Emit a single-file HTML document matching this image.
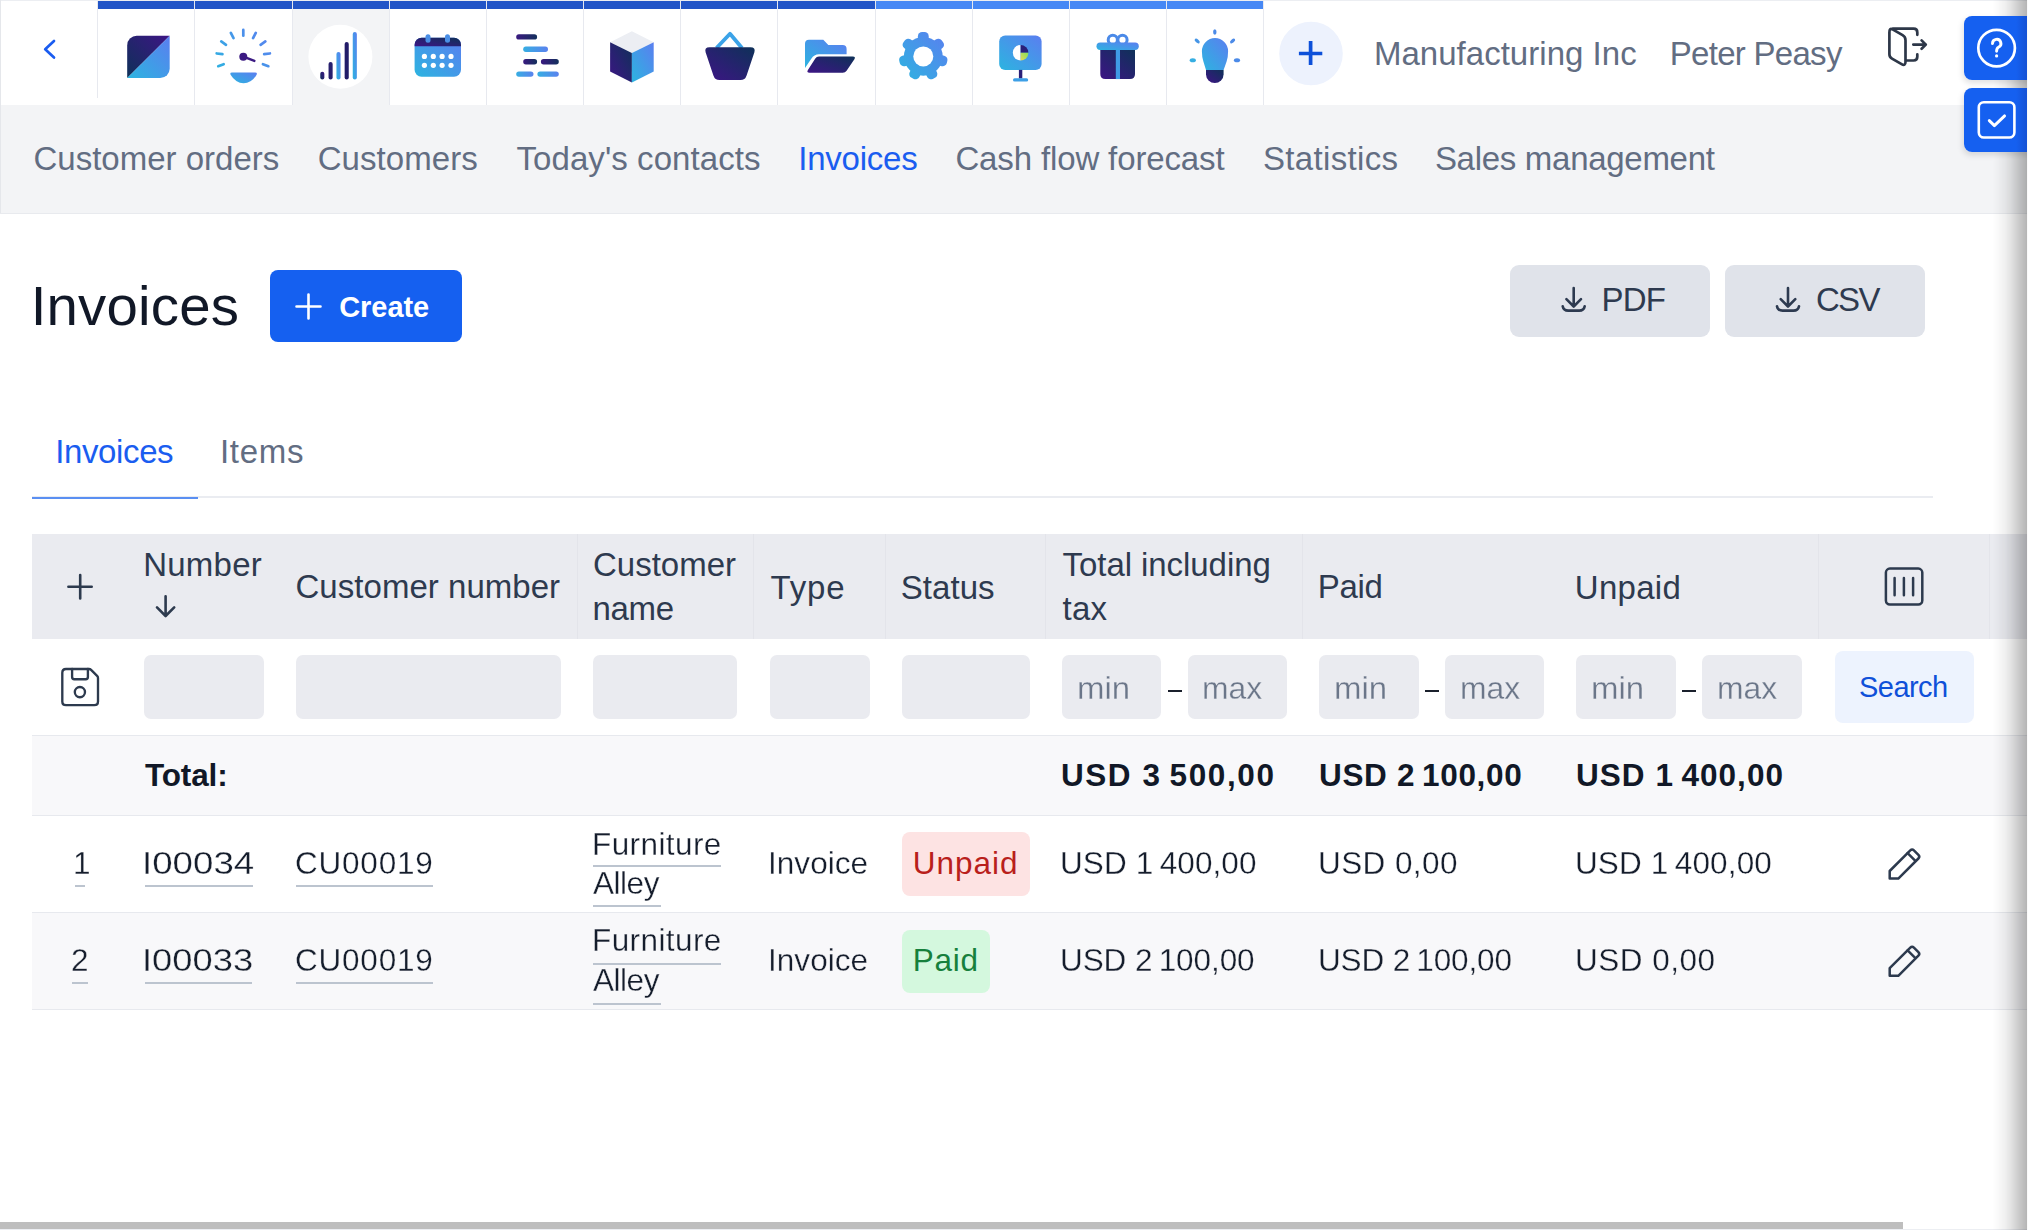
<!DOCTYPE html>
<html><head><meta charset="utf-8">
<style>
html,body{margin:0;padding:0;}
body{width:2028px;height:1230px;overflow:hidden;position:relative;background:#fff;font-family:"Liberation Sans",sans-serif;}
.a{position:absolute;}
.t{position:absolute;line-height:1;white-space:nowrap;}
.cell{position:absolute;top:0;height:105px;}
.vline{position:absolute;width:1px;background:#e6e8ee;}
.hline{position:absolute;height:1px;background:#e7e9ee;}
.inp{position:absolute;background:#eaebf0;border-radius:7px;top:655px;height:64px;}
.ul{position:absolute;height:2px;background:#bcc4cf;}
</style></head><body>
<!-- top bar -->
<div class="a" style="left:0;top:0;width:2028px;height:1px;background:#eceef2"></div>
<div class="a" style="left:0;top:0;width:1px;height:213px;background:#e5e7eb"></div>
<div class="a" style="left:292.2px;top:9px;width:97px;height:96px;background:#f3f4f6"></div>
<div class="a" style="left:98.20px;top:1px;width:96.18px;height:8px;background:#2255c7"></div>
<div class="a" style="left:195.38px;top:1px;width:96.18px;height:8px;background:#2255c7"></div>
<div class="a" style="left:292.56px;top:1px;width:96.18px;height:8px;background:#2255c7"></div>
<div class="a" style="left:389.74px;top:1px;width:96.18px;height:8px;background:#2255c7"></div>
<div class="a" style="left:486.92px;top:1px;width:96.18px;height:8px;background:#2255c7"></div>
<div class="a" style="left:584.10px;top:1px;width:96.18px;height:8px;background:#2255c7"></div>
<div class="a" style="left:681.28px;top:1px;width:96.18px;height:8px;background:#2255c7"></div>
<div class="a" style="left:778.46px;top:1px;width:96.18px;height:8px;background:#2255c7"></div>
<div class="a" style="left:875.64px;top:1px;width:96.18px;height:8px;background:#4688f5"></div>
<div class="a" style="left:972.82px;top:1px;width:96.18px;height:8px;background:#4688f5"></div>
<div class="a" style="left:1070.00px;top:1px;width:96.18px;height:8px;background:#4688f5"></div>
<div class="a" style="left:1167.18px;top:1px;width:96.18px;height:8px;background:#4688f5"></div>
<div class="a" style="left:97.20px;top:1px;width:1px;height:97px;background:#e7e9ef"></div>
<div class="a" style="left:194.38px;top:1px;width:1px;height:105px;background:#e7e9ef"></div>
<div class="a" style="left:291.56px;top:1px;width:1px;height:105px;background:#e7e9ef"></div>
<div class="a" style="left:388.74px;top:1px;width:1px;height:105px;background:#e7e9ef"></div>
<div class="a" style="left:485.92px;top:1px;width:1px;height:105px;background:#e7e9ef"></div>
<div class="a" style="left:583.10px;top:1px;width:1px;height:105px;background:#e7e9ef"></div>
<div class="a" style="left:680.28px;top:1px;width:1px;height:105px;background:#e7e9ef"></div>
<div class="a" style="left:777.46px;top:1px;width:1px;height:105px;background:#e7e9ef"></div>
<div class="a" style="left:874.64px;top:1px;width:1px;height:105px;background:#e7e9ef"></div>
<div class="a" style="left:971.82px;top:1px;width:1px;height:105px;background:#e7e9ef"></div>
<div class="a" style="left:1069.00px;top:1px;width:1px;height:105px;background:#e7e9ef"></div>
<div class="a" style="left:1166.18px;top:1px;width:1px;height:105px;background:#e7e9ef"></div>
<div class="a" style="left:1263.36px;top:1px;width:1px;height:105px;background:#e7e9ef"></div>
<!-- nav -->
<div class="a" style="left:1px;top:105px;width:2027px;height:108px;background:#f3f4f6"></div>
<div class="a" style="left:0;top:213px;width:2028px;height:1px;background:#e8eaee"></div>

<!-- buttons -->
<div class="a" style="left:270px;top:270px;width:192px;height:72px;background:#1560f0;border-radius:8px"></div>
<div class="a" style="left:1510px;top:264.5px;width:200px;height:72px;background:#e0e3ea;border-radius:9px"></div>
<div class="a" style="left:1725px;top:264.5px;width:200px;height:72px;background:#e0e3ea;border-radius:9px"></div>

<!-- tabs -->
<div class="a" style="left:32px;top:496px;width:1901px;height:2px;background:#eaecf1"></div>
<div class="a" style="left:32px;top:496.8px;width:166px;height:2.2px;background:#5a8ff2"></div>

<!-- table -->
<div class="a" style="left:32px;top:534px;width:1996px;height:105px;background:#eaebf0"></div>
<div class="vline" style="left:577px;top:534px;height:105px;background:#e3e4ea"></div>
<div class="vline" style="left:753px;top:534px;height:105px;background:#e3e4ea"></div>
<div class="vline" style="left:885px;top:534px;height:105px;background:#e3e4ea"></div>
<div class="vline" style="left:1045px;top:534px;height:105px;background:#e3e4ea"></div>
<div class="vline" style="left:1302px;top:534px;height:105px;background:#e3e4ea"></div>
<div class="vline" style="left:1818px;top:534px;height:105px;background:#e3e4ea"></div>
<div class="vline" style="left:1989px;top:534px;height:105px;background:#e3e4ea"></div>

<div class="inp" style="left:144px;width:120px"></div>
<div class="inp" style="left:296px;width:265px"></div>
<div class="inp" style="left:593px;width:144px"></div>
<div class="inp" style="left:769.5px;width:100px"></div>
<div class="inp" style="left:902px;width:128px"></div>
<div class="inp" style="left:1062px;width:99px"></div>
<div class="inp" style="left:1187.5px;width:99px"></div>
<div class="inp" style="left:1319px;width:100px"></div>
<div class="inp" style="left:1445px;width:99px"></div>
<div class="inp" style="left:1576.3px;width:100px"></div>
<div class="inp" style="left:1702px;width:100px"></div>
<div class="a" style="left:1168px;top:689.5px;width:14px;height:2px;background:#1a202c"></div>
<div class="a" style="left:1425px;top:689.5px;width:14px;height:2px;background:#1a202c"></div>
<div class="a" style="left:1682px;top:689.5px;width:14px;height:2px;background:#1a202c"></div>
<div class="a" style="left:1834.6px;top:650.5px;width:139px;height:72px;background:#edf3fe;border-radius:8px"></div>

<div class="hline" style="left:32px;top:735px;width:1996px"></div>
<div class="a" style="left:32px;top:736px;width:1996px;height:79px;background:#f8f8fa"></div>
<div class="hline" style="left:32px;top:815px;width:1996px"></div>
<div class="hline" style="left:32px;top:912px;width:1996px"></div>
<div class="a" style="left:32px;top:913px;width:1996px;height:96px;background:#f8f8fa"></div>
<div class="hline" style="left:32px;top:1009px;width:1996px"></div>

<!-- badges -->
<div class="a" style="left:902px;top:832.3px;width:127.6px;height:63.5px;background:#fde3e3;border-radius:8px"></div>
<div class="a" style="left:902px;top:929.6px;width:87.5px;height:63.5px;background:#d4f8de;border-radius:8px"></div>

<!-- underlines -->
<div class="ul" style="left:75px;top:884.6px;width:10px"></div>
<div class="ul" style="left:145px;top:884.6px;width:108px"></div>
<div class="ul" style="left:296px;top:884.6px;width:137px"></div>
<div class="ul" style="left:593px;top:865.3px;width:127.5px"></div>
<div class="ul" style="left:593px;top:905.4px;width:68px"></div>
<div class="ul" style="left:72px;top:982px;width:16px"></div>
<div class="ul" style="left:145px;top:982px;width:106.5px"></div>
<div class="ul" style="left:296px;top:982px;width:137px"></div>
<div class="ul" style="left:593px;top:962.7px;width:127.5px"></div>
<div class="ul" style="left:593px;top:1002.5px;width:68px"></div>

<div class="t" style="left:1373.90px;top:36.95px;font-size:33.00px;letter-spacing:0.030px;color:#626d82;">Manufacturing Inc</div>
<div class="t" style="left:1669.80px;top:36.95px;font-size:33.00px;letter-spacing:-0.715px;color:#626d82;">Peter Peasy</div>
<div class="t" style="left:33.50px;top:142.05px;font-size:33.00px;letter-spacing:0.003px;color:#626d82;">Customer orders</div>
<div class="t" style="left:317.70px;top:142.05px;font-size:33.00px;letter-spacing:0.081px;color:#626d82;">Customers</div>
<div class="t" style="left:516.50px;top:142.05px;font-size:33.00px;letter-spacing:0.072px;color:#626d82;">Today's contacts</div>
<div class="t" style="left:798.30px;top:142.05px;font-size:33.00px;letter-spacing:-0.235px;color:#1a5df0;">Invoices</div>
<div class="t" style="left:955.40px;top:142.05px;font-size:33.00px;letter-spacing:-0.133px;color:#626d82;">Cash flow forecast</div>
<div class="t" style="left:1262.90px;top:142.05px;font-size:33.00px;letter-spacing:0.352px;color:#626d82;">Statistics</div>
<div class="t" style="left:1434.90px;top:142.05px;font-size:33.00px;letter-spacing:-0.289px;color:#626d82;">Sales management</div>
<div class="t" style="left:30.70px;top:278.03px;font-size:56.40px;letter-spacing:0.189px;color:#111827;">Invoices</div>
<div class="t" style="left:339.20px;top:293.44px;font-size:29.00px;letter-spacing:-0.055px;color:#ffffff;font-weight:bold;">Create</div>
<div class="t" style="left:1601.40px;top:282.95px;font-size:33.00px;letter-spacing:-0.700px;color:#2e3a4f;">PDF</div>
<div class="t" style="left:1816.00px;top:282.95px;font-size:33.00px;letter-spacing:-1.724px;color:#2e3a4f;">CSV</div>
<div class="t" style="left:55.20px;top:434.95px;font-size:33.00px;letter-spacing:-0.378px;color:#1a5df0;">Invoices</div>
<div class="t" style="left:220.00px;top:434.95px;font-size:33.00px;letter-spacing:0.704px;color:#626d82;">Items</div>
<div class="t" style="left:143.20px;top:548.45px;font-size:33.00px;letter-spacing:0.244px;color:#2e3a4f;">Number</div>
<div class="t" style="left:295.50px;top:570.45px;font-size:33.00px;letter-spacing:0.036px;color:#2e3a4f;">Customer number</div>
<div class="t" style="left:593.00px;top:547.95px;font-size:33.00px;letter-spacing:-0.008px;color:#2e3a4f;">Customer</div>
<div class="t" style="left:592.60px;top:592.05px;font-size:33.00px;letter-spacing:-0.378px;color:#2e3a4f;">name</div>
<div class="t" style="left:770.50px;top:570.65px;font-size:33.00px;letter-spacing:0.852px;color:#2e3a4f;">Type</div>
<div class="t" style="left:900.70px;top:570.65px;font-size:33.00px;letter-spacing:0.069px;color:#2e3a4f;">Status</div>
<div class="t" style="left:1062.60px;top:548.25px;font-size:33.00px;letter-spacing:-0.066px;color:#2e3a4f;">Total including</div>
<div class="t" style="left:1062.60px;top:591.75px;font-size:33.00px;letter-spacing:0.139px;color:#2e3a4f;">tax</div>
<div class="t" style="left:1317.80px;top:570.35px;font-size:33.00px;letter-spacing:-0.344px;color:#2e3a4f;">Paid</div>
<div class="t" style="left:1574.80px;top:570.55px;font-size:33.00px;letter-spacing:0.285px;color:#2e3a4f;">Unpaid</div>
<div class="t" style="left:1076.71px;top:672.97px;font-size:30.50px;color:#6b7689;transform:scaleX(1.0811);transform-origin:0 0;-webkit-text-stroke:0.3px #eaebf0;will-change:transform;">min</div>
<div class="t" style="left:1333.61px;top:672.97px;font-size:30.50px;color:#6b7689;transform:scaleX(1.0811);transform-origin:0 0;-webkit-text-stroke:0.3px #eaebf0;will-change:transform;">min</div>
<div class="t" style="left:1591.31px;top:672.97px;font-size:30.50px;color:#6b7689;transform:scaleX(1.0811);transform-origin:0 0;-webkit-text-stroke:0.3px #eaebf0;will-change:transform;">min</div>
<div class="t" style="left:1202.29px;top:672.97px;font-size:30.50px;color:#6b7689;transform:scaleX(1.0440);transform-origin:0 0;-webkit-text-stroke:0.3px #eaebf0;will-change:transform;">max</div>
<div class="t" style="left:1459.79px;top:672.97px;font-size:30.50px;color:#6b7689;transform:scaleX(1.0440);transform-origin:0 0;-webkit-text-stroke:0.3px #eaebf0;will-change:transform;">max</div>
<div class="t" style="left:1716.99px;top:672.97px;font-size:30.50px;color:#6b7689;transform:scaleX(1.0440);transform-origin:0 0;-webkit-text-stroke:0.3px #eaebf0;will-change:transform;">max</div>
<div class="t" style="left:1859.00px;top:672.74px;font-size:29.00px;letter-spacing:-0.534px;color:#0f50d9;">Search</div>
<div class="t" style="left:145.00px;top:759.92px;font-size:31.50px;letter-spacing:-0.156px;color:#111827;font-weight:bold;">Total:</div>
<div class="t" style="left:1060.90px;top:759.62px;font-size:31.50px;letter-spacing:1.598px;color:#111827;font-weight:bold;">USD 3 500,00</div>
<div class="t" style="left:1319.00px;top:759.62px;font-size:31.50px;letter-spacing:0.661px;color:#111827;font-weight:bold;">USD 2 100,00</div>
<div class="t" style="left:1576.00px;top:759.62px;font-size:31.50px;letter-spacing:1.052px;color:#111827;font-weight:bold;">USD 1 400,00</div>
<div class="t" style="left:73.20px;top:847.92px;font-size:31.50px;letter-spacing:0.000px;color:#151d2c;-webkit-text-stroke:0.3px #ffffff;will-change:transform;">1</div>
<div class="t" style="left:141.61px;top:847.92px;font-size:31.50px;color:#151d2c;transform:scaleX(1.1652);transform-origin:0 0;-webkit-text-stroke:0.3px #ffffff;will-change:transform;">I00034</div>
<div class="t" style="left:1060.20px;top:847.92px;font-size:31.50px;letter-spacing:0.098px;color:#151d2c;-webkit-text-stroke:0.3px #ffffff;will-change:transform;">USD 1 400,00</div>
<div class="t" style="left:1318.00px;top:847.92px;font-size:31.50px;letter-spacing:0.407px;color:#151d2c;-webkit-text-stroke:0.3px #ffffff;will-change:transform;">USD 0,00</div>
<div class="t" style="left:1575.00px;top:847.92px;font-size:31.50px;letter-spacing:0.125px;color:#151d2c;-webkit-text-stroke:0.3px #ffffff;will-change:transform;">USD 1 400,00</div>
<div class="t" style="left:912.70px;top:847.92px;font-size:31.50px;letter-spacing:1.015px;color:#b91f1c;">Unpaid</div>
<div class="t" style="left:295.20px;top:847.92px;font-size:31.50px;letter-spacing:0.785px;color:#151d2c;-webkit-text-stroke:0.3px #ffffff;will-change:transform;">CU00019</div>
<div class="t" style="left:591.70px;top:828.52px;font-size:31.50px;letter-spacing:0.417px;color:#151d2c;-webkit-text-stroke:0.3px #ffffff;will-change:transform;">Furniture</div>
<div class="t" style="left:593.00px;top:867.92px;font-size:31.50px;letter-spacing:-0.473px;color:#151d2c;-webkit-text-stroke:0.3px #ffffff;will-change:transform;">Alley</div>
<div class="t" style="left:767.80px;top:847.92px;font-size:31.50px;letter-spacing:0.035px;color:#151d2c;-webkit-text-stroke:0.3px #ffffff;will-change:transform;">Invoice</div>
<div class="t" style="left:71.00px;top:945.12px;font-size:31.50px;letter-spacing:0.000px;color:#151d2c;-webkit-text-stroke:0.3px #f8f8fa;will-change:transform;">2</div>
<div class="t" style="left:141.65px;top:945.12px;font-size:31.50px;color:#151d2c;transform:scaleX(1.1537);transform-origin:0 0;-webkit-text-stroke:0.3px #f8f8fa;will-change:transform;">I00033</div>
<div class="t" style="left:1060.20px;top:945.12px;font-size:31.50px;letter-spacing:-0.075px;color:#151d2c;-webkit-text-stroke:0.3px #f8f8fa;will-change:transform;">USD 2 100,00</div>
<div class="t" style="left:1318.00px;top:945.12px;font-size:31.50px;letter-spacing:-0.130px;color:#151d2c;-webkit-text-stroke:0.3px #f8f8fa;will-change:transform;">USD 2 100,00</div>
<div class="t" style="left:1575.00px;top:945.12px;font-size:31.50px;letter-spacing:0.492px;color:#151d2c;-webkit-text-stroke:0.3px #f8f8fa;will-change:transform;">USD 0,00</div>
<div class="t" style="left:912.70px;top:945.12px;font-size:31.50px;letter-spacing:0.723px;color:#16803c;">Paid</div>
<div class="t" style="left:295.20px;top:945.12px;font-size:31.50px;letter-spacing:0.785px;color:#151d2c;-webkit-text-stroke:0.3px #f8f8fa;will-change:transform;">CU00019</div>
<div class="t" style="left:591.70px;top:925.42px;font-size:31.50px;letter-spacing:0.417px;color:#151d2c;-webkit-text-stroke:0.3px #f8f8fa;will-change:transform;">Furniture</div>
<div class="t" style="left:593.00px;top:965.32px;font-size:31.50px;letter-spacing:-0.473px;color:#151d2c;-webkit-text-stroke:0.3px #f8f8fa;will-change:transform;">Alley</div>
<div class="t" style="left:767.80px;top:945.12px;font-size:31.50px;letter-spacing:0.035px;color:#151d2c;-webkit-text-stroke:0.3px #f8f8fa;will-change:transform;">Invoice</div>

<svg class="a" style="left:0;top:0" width="2028" height="1230" viewBox="0 0 2028 1230">
<defs>
<linearGradient id="gd" x1="0" y1="1" x2="1" y2="0"><stop offset="0" stop-color="#3d1585"/><stop offset="1" stop-color="#0e3158"/></linearGradient>
<linearGradient id="gdr" x1="0" y1="1" x2="1" y2="0"><stop offset="0" stop-color="#0e3158"/><stop offset="1" stop-color="#3d1585"/></linearGradient>
<linearGradient id="gb" x1="0" y1="1" x2="1" y2="0"><stop offset="0" stop-color="#2cb4e0"/><stop offset="1" stop-color="#5b7ef0"/></linearGradient>
<linearGradient id="gsp" gradientUnits="userSpaceOnUse" x1="216" y1="75" x2="272" y2="30"><stop offset="0" stop-color="#2cb4e0"/><stop offset="1" stop-color="#5b7ef0"/></linearGradient>
<linearGradient id="gpie" x1="0" y1="1" x2="1" y2="0"><stop offset="0" stop-color="#e6d85a"/><stop offset="1" stop-color="#7fe05a"/></linearGradient>
</defs>
<polyline points="54,41 45.2,49.3 54,57.6" fill="none" stroke="#1a5cf0" stroke-width="2.7" stroke-linecap="round" stroke-linejoin="round"/>
<path d="M127.2,78 L127.2,45.2 A9.5,9.5 0 0 1 136.7,35.7 L169.7,35.7 Z" fill="url(#gdr)"/>
<path d="M127.2,78 L169.7,35.7 L169.7,68.5 A9.5,9.5 0 0 1 160.2,78 Z" fill="url(#gb)"/>
<line x1="223.67" y1="64.16" x2="218.25" y2="66.22" stroke="url(#gsp)" stroke-width="2.7" stroke-linecap="round"/>
<line x1="222.45" y1="54.18" x2="216.69" y2="53.48" stroke="url(#gsp)" stroke-width="2.7" stroke-linecap="round"/>
<line x1="226.01" y1="44.78" x2="221.24" y2="41.48" stroke="url(#gsp)" stroke-width="2.7" stroke-linecap="round"/>
<line x1="233.54" y1="38.11" x2="230.84" y2="32.97" stroke="url(#gsp)" stroke-width="2.7" stroke-linecap="round"/>
<line x1="243.30" y1="35.70" x2="243.30" y2="29.90" stroke="url(#gsp)" stroke-width="2.7" stroke-linecap="round"/>
<line x1="253.06" y1="38.11" x2="255.76" y2="32.97" stroke="url(#gsp)" stroke-width="2.7" stroke-linecap="round"/>
<line x1="260.59" y1="44.78" x2="265.36" y2="41.48" stroke="url(#gsp)" stroke-width="2.7" stroke-linecap="round"/>
<line x1="264.15" y1="54.18" x2="269.91" y2="53.48" stroke="url(#gsp)" stroke-width="2.7" stroke-linecap="round"/>
<line x1="262.93" y1="64.16" x2="268.35" y2="66.22" stroke="url(#gsp)" stroke-width="2.7" stroke-linecap="round"/>
<circle cx="243.3" cy="56.7" r="4" fill="#3b1a82"/>
<line x1="243.3" y1="56.7" x2="254.4" y2="60.9" stroke="#3b1a82" stroke-width="2.4" stroke-linecap="round"/>
<path d="M232,72.4 L255.2,72.4 Q257.6,72.4 256.6,74.8 Q251.5,83.2 243.6,83.2 Q235.7,83.2 230.6,74.8 Q229.6,72.4 232,72.4 Z" fill="url(#gb)"/>
<circle cx="340.4" cy="56.8" r="32" fill="#ffffff"/>
<rect x="320.25" y="71.70" width="4.1" height="7.90" rx="2.05" fill="url(#gdr)"/>
<rect x="328.55" y="62.00" width="4.1" height="17.60" rx="2.05" fill="#27206e"/>
<rect x="336.45" y="52.00" width="4.1" height="27.60" rx="2.05" fill="url(#gb)"/>
<rect x="344.65" y="42.00" width="4.1" height="37.60" rx="2.05" fill="#221c68"/>
<rect x="352.75" y="32.00" width="4.1" height="47.60" rx="2.05" fill="url(#gb)"/>
<rect x="414.6" y="37.7" width="46.4" height="39.1" rx="7" fill="url(#gb)"/>
<path d="M414.6,46.2 L414.6,44.7 A7,7 0 0 1 421.6,37.7 L454,37.7 A7,7 0 0 1 461,44.7 L461,46.2 Z" fill="url(#gd)"/>
<rect x="425.5" y="34.2" width="5" height="8.6" rx="2.5" fill="#4a8fe6"/>
<rect x="445" y="34.2" width="5" height="8.6" rx="2.5" fill="#4a8fe6"/>
<circle cx="424.4" cy="56.4" r="2.6" fill="#fff"/>
<circle cx="433.3" cy="56.4" r="2.6" fill="#fff"/>
<circle cx="442.1" cy="56.4" r="2.6" fill="#fff"/>
<circle cx="451.0" cy="56.4" r="2.6" fill="#fff"/>
<circle cx="424.4" cy="65.3" r="2.6" fill="#fff"/>
<circle cx="433.3" cy="65.3" r="2.6" fill="#fff"/>
<circle cx="442.1" cy="65.3" r="2.6" fill="#fff"/>
<circle cx="451.0" cy="65.3" r="2.6" fill="#fff"/>
<defs><linearGradient id="ggd" x1="0" y1="0" x2="1" y2="0"><stop offset="0" stop-color="#3a1a80"/><stop offset="1" stop-color="#13305c"/></linearGradient><linearGradient id="ggb" x1="0" y1="0" x2="1" y2="0"><stop offset="0" stop-color="#36aee2"/><stop offset="1" stop-color="#5a82ee"/></linearGradient></defs>
<rect x="516.20" y="34.20" width="20.90" height="5.4" rx="2.7" fill="url(#ggd)"/>
<rect x="523.20" y="46.60" width="24.80" height="5.4" rx="2.7" fill="url(#ggb)"/>
<rect x="523.20" y="59.00" width="13.90" height="5.4" rx="2.7" fill="url(#ggd)"/>
<rect x="540.90" y="59.00" width="17.90" height="5.4" rx="2.7" fill="url(#ggd)"/>
<rect x="516.20" y="71.40" width="17.30" height="5.4" rx="2.7" fill="url(#ggb)"/>
<rect x="537.40" y="71.40" width="21.40" height="5.4" rx="2.7" fill="url(#ggb)"/>
<polygon points="631.9,31.3 653.7,42.2 631.9,53 610.1,42.2" fill="#eceef3"/>
<polygon points="610.1,42.2 631.9,53 631.9,82.4 610.1,71.5" fill="url(#gd)"/>
<polygon points="631.9,53 653.7,42.2 653.7,71.5 631.9,82.4" fill="url(#gb)"/>
<polyline points="716.5,48 730,33.8 742,48" fill="none" stroke="#3ba3e8" stroke-width="3.8" stroke-linejoin="round"/>
<path d="M709.5,47.2 H750.5 Q755.8,47.2 754.4,52.3 L746.6,75.4 Q745.1,80 740.5,80 H719.5 Q714.9,80 713.4,75.4 L705.6,52.3 Q704.2,47.2 709.5,47.2 Z" fill="url(#gd)"/>
<path d="M805,43.7 Q805,39.7 809,39.7 H823.3 L828.3,45.1 H842.6 Q846.6,45.1 846.6,49.1 V54.3 H819 Q814,54.3 811.3,58.8 L805,68 Z" fill="url(#gb)"/>
<path d="M819,56.5 H852.8 Q856,56.5 854.4,59.2 L846.6,70.8 Q845.2,72.8 842.8,72.8 H809.5 Q806.3,72.8 807.9,70.1 L815.3,58.4 Q816.5,56.5 819,56.5 Z" fill="url(#gd)" stroke="#fff" stroke-width="2.2" paint-order="stroke"/>
<defs><linearGradient id="gsp2" gradientUnits="userSpaceOnUse" x1="899" y1="80" x2="947" y2="32"><stop offset="0" stop-color="#2cb4e0"/><stop offset="1" stop-color="#5b7ef0"/></linearGradient></defs>
<g fill="url(#gsp2)"><circle cx="923.30" cy="56.40" r="19.4"/><path d="M917.90,43.40 L917.90,36.20 A4.20,4.20 0 0 1 922.10,32.00 L924.50,32.00 A4.20,4.20 0 0 1 928.70,36.20 L928.70,43.40 Z"/><path d="M930.10,44.07 L935.73,39.58 A4.20,4.20 0 0 1 941.63,40.25 L943.12,42.13 A4.20,4.20 0 0 1 942.46,48.03 L936.83,52.52 Z"/><path d="M937.18,54.03 L944.20,55.63 A4.20,4.20 0 0 1 947.36,60.66 L946.82,63.00 A4.20,4.20 0 0 1 941.79,66.16 L934.77,64.56 Z"/><path d="M933.81,65.77 L936.93,72.26 A4.20,4.20 0 0 1 934.97,77.86 L932.81,78.90 A4.20,4.20 0 0 1 927.20,76.94 L924.08,70.46 Z"/><path d="M922.52,70.46 L919.40,76.94 A4.20,4.20 0 0 1 913.79,78.90 L911.63,77.86 A4.20,4.20 0 0 1 909.67,72.26 L912.79,65.77 Z"/><path d="M911.83,64.56 L904.81,66.16 A4.20,4.20 0 0 1 899.78,63.00 L899.24,60.66 A4.20,4.20 0 0 1 902.40,55.63 L909.42,54.03 Z"/><path d="M909.77,52.52 L904.14,48.03 A4.20,4.20 0 0 1 903.48,42.13 L904.97,40.25 A4.20,4.20 0 0 1 910.87,39.58 L916.50,44.07 Z"/></g>
<circle cx="923.3" cy="56.4" r="10" fill="#fff"/>
<rect x="999.2" y="35.5" width="42.4" height="34.4" rx="6" fill="url(#gb)"/>
<path d="M1020.6,44.9 A7.8,7.8 0 0 0 1020.6,60.5 Z" fill="#fff"/>
<path d="M1020.6,44.9 A7.8,7.8 0 0 1 1028.4,52.7 L1020.6,52.7 Z" fill="#2a1f78"/>
<path d="M1028.4,52.7 A7.8,7.8 0 0 1 1020.6,60.5 L1020.6,52.7 Z" fill="url(#gpie)"/>
<rect x="1018.9" y="69.9" width="3.4" height="8.6" fill="#2a1f78"/>
<rect x="1013" y="78.2" width="15.2" height="3.4" rx="1.7" fill="#3d9fe6"/>
<circle cx="1112.8" cy="39.9" r="4.6" fill="none" stroke="#4b8ae8" stroke-width="3"/>
<circle cx="1122.5" cy="39.9" r="4.6" fill="none" stroke="#4b8ae8" stroke-width="3"/>
<path d="M1100.3,49.8 H1135 V74.1 Q1135,79.1 1130,79.1 H1105.3 Q1100.3,79.1 1100.3,74.1 Z" fill="url(#gd)"/>
<rect x="1115.8" y="49.8" width="4.2" height="29.3" fill="#3f9ae6"/>
<rect x="1096.5" y="42.6" width="42.3" height="7.4" rx="3.7" fill="url(#gb)"/>
<path d="M1206,70.1 L1203.4,61.5 Q1201.9,57 1201.9,51.2 A13.1,13.1 0 0 1 1228.1,51.2 Q1228.1,57 1226.6,61.5 L1223.6,70.1 Z" fill="url(#gb)"/>
<path d="M1206,70.1 H1223.6 V74.3 A8.8,8.7 0 0 1 1206,74.3 Z" fill="url(#gd)"/>
<ellipse cx="1214.8" cy="32" rx="1.7" ry="2.8" fill="#4b8ae8"/>
<ellipse cx="1197.2" cy="41" rx="1.7" ry="3" transform="rotate(-50 1197.2 41)" fill="#4595e6"/>
<ellipse cx="1232.6" cy="41" rx="1.7" ry="3" transform="rotate(50 1232.6 41)" fill="#4b8ae8"/>
<ellipse cx="1192.8" cy="60.3" rx="3.1" ry="2" fill="#35aee2"/>
<ellipse cx="1237" cy="60.3" rx="3.1" ry="2" fill="#4b8ae8"/>
<circle cx="1311" cy="53.5" r="31.8" fill="#edf2fd"/>
<path d="M1298.9,53.5 H1322.3 M1310.6,41 V65" stroke="#0d50d9" stroke-width="3.7"/>
<g fill="none" stroke="#2d3748" stroke-width="2.7" stroke-linecap="round" stroke-linejoin="round">
<path d="M1893,28.7 H1913.6 Q1917.3,28.7 1917.3,32.4 V34.8 M1917.3,54.4 V56.8 Q1917.3,60.5 1913.6,60.5 H1906.4"/>
<path d="M1892.6,29.4 L1902.6,35.2 Q1905.5,36.9 1905.5,40.2 V61.8 Q1905.5,66.3 1901.6,64.1 L1892,58.6 Q1889.4,57.1 1889.4,54.2 V32.4 Q1889.4,27.6 1892.6,29.4 Z"/>
<path d="M1913.3,44.6 H1925.8 M1921.6,40.4 L1925.8,44.6 L1921.6,48.8"/>
</g>
<g fill="none" stroke="#2d3a50" stroke-width="2.6" stroke-linecap="round" stroke-linejoin="round">
<path d="M1573.7,288 V306.3 M1566.4,299.2 L1573.7,306.5 L1581.0,299.2"/>
<path d="M1562.7,306.2 Q1563.5,310.6 1568.2,310.6 H1579.2 Q1583.9,310.6 1584.7,306.2"/>
</g>
<g fill="none" stroke="#2d3a50" stroke-width="2.6" stroke-linecap="round" stroke-linejoin="round">
<path d="M1788.0,288 V306.3 M1780.7,299.2 L1788.0,306.5 L1795.3,299.2"/>
<path d="M1777.0,306.2 Q1777.8,310.6 1782.5,310.6 H1793.5 Q1798.2,310.6 1799.0,306.2"/>
</g>
<path d="M296.5,306.5 H320.5 M308.5,294.5 V318.5" stroke="#fff" stroke-width="2.6" stroke-linecap="round"/>
<path d="M68.4,586.8 H91.7 M80.2,575 V598.4" stroke="#2d3a4e" stroke-width="2.6" stroke-linecap="round"/>
<path d="M165.6,596.2 V615.3 M157,607.4 L165.6,616 L174.2,607.4" fill="none" stroke="#2d3a4e" stroke-width="2.6" stroke-linecap="round" stroke-linejoin="round"/>
<g fill="none" stroke="#2d3a4e" stroke-width="2.35" stroke-linecap="round" stroke-linejoin="round">
<path d="M66,669 H89 Q90.2,669 91.1,669.9 L97.1,675.9 Q98,676.8 98,678 V701.4 Q98,705.1 94.3,705.1 H66 Q62.3,705.1 62.3,701.4 V672.7 Q62.3,669 66,669 Z"/>
<circle cx="79.9" cy="692.1" r="5.1"/>
<path d="M87.9,669 V677 Q87.9,679.2 85.7,679.2 H74.3 Q72.1,679.2 72.1,677 V669"/>
</g>
<g fill="none" stroke="#2d3a4e" stroke-width="2.5" stroke-linecap="round" stroke-linejoin="round">
<rect x="1885.9" y="568.6" width="36.4" height="36" rx="4"/>
<path d="M1894.6,578 V595.2 M1903.9,578 V595.2 M1913.1,578 V595.2"/>
</g>
<g fill="none" stroke="#2d3a4e" stroke-width="2.5" stroke-linecap="round" stroke-linejoin="round" transform="translate(0 0.0)">
<path d="M1889.7,878.6 V871 L1910.3,850.4 Q1912.1,848.6 1913.9,850.4 L1918.4,854.9 Q1920.2,856.7 1918.4,858.5 L1898.3,878.6 Z"/>
<path d="M1907.6,853.1 L1915.4,860.9"/>
</g>
<g fill="none" stroke="#2d3a4e" stroke-width="2.5" stroke-linecap="round" stroke-linejoin="round" transform="translate(0 97.2)">
<path d="M1889.7,878.6 V871 L1910.3,850.4 Q1912.1,848.6 1913.9,850.4 L1918.4,854.9 Q1920.2,856.7 1918.4,858.5 L1898.3,878.6 Z"/>
<path d="M1907.6,853.1 L1915.4,860.9"/>
</g>
</svg>

<!-- scrollbar -->
<div class="a" style="left:0;top:1222px;width:1903px;height:7px;background:#bebebe"></div>
<div class="a" style="left:0;top:1229px;width:2028px;height:1px;background:#eceef2"></div>

<!-- right shadow -->
<div class="a" style="left:1993px;top:0;width:34px;height:1230px;background:linear-gradient(to right,rgba(0,0,0,0) 0%,rgba(0,0,0,0.03) 20%,rgba(0,0,0,0.06) 35%,rgba(0,0,0,0.10) 50%,rgba(0,0,0,0.16) 65%,rgba(0,0,0,0.22) 80%,rgba(0,0,0,0.29) 100%)"></div>
<!-- side buttons -->
<div class="a" style="left:1964.4px;top:15.9px;width:80px;height:64px;background:linear-gradient(to right,#1560f0 0,#1560f0 52px,#1553d6 62px);border-radius:8px;box-shadow:-1px 3px 6px rgba(0,0,0,0.13)"></div>
<div class="a" style="left:1964.4px;top:87.9px;width:80px;height:64.1px;background:linear-gradient(to right,#1560f0 0,#1560f0 52px,#1553d6 62px);border-radius:8px;box-shadow:-1px 3px 6px rgba(0,0,0,0.13)"></div>
<svg class="a" style="left:1940px;top:0" width="88" height="170" viewBox="1940 0 88 170">
<g fill="none" stroke="#fff" stroke-width="2.3" stroke-linecap="round" stroke-linejoin="round">
<circle cx="1996.6" cy="48.1" r="18.3" stroke-width="2.7"/>
<path d="M1992.5,43.6 A4.2,4.2 0 1 1 1998.5,47.3 Q1996.6,48.3 1996.6,51.2" stroke-width="2.9"/>
<rect x="1978.8" y="102.3" width="35.6" height="35.2" rx="5" stroke-width="2.6"/>
<path d="M1989.3,120.6 L1994.4,125.6 L2004.6,115.9" stroke-width="2.9"/>
</g>
<circle cx="1996.6" cy="55.9" r="1.6" fill="#fff"/>
</svg>

<div class="a" style="left:2027px;top:0;width:1px;height:1230px;background:#fafafa"></div>
</body></html>
